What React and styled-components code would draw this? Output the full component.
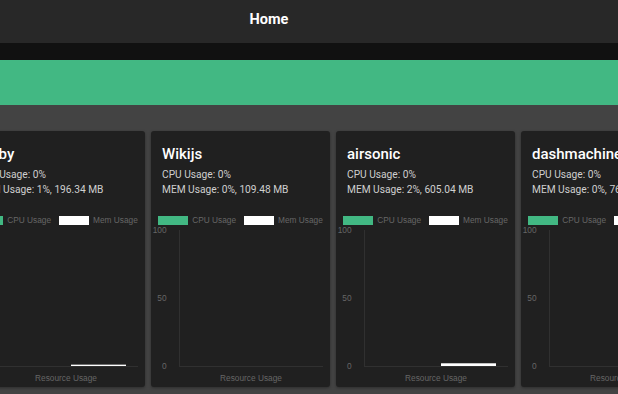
import React from 'react';
import styled, { createGlobalStyle } from 'styled-components';

const GlobalStyle = createGlobalStyle`
    html, body {
        margin: 0;
        padding: 0;
        background: #434343;
        overflow: hidden;
        font-family: Roboto, "Liberation Sans", sans-serif;
    }
`

const Page = styled.div`
    width: 618px;
    height: 394px;
    overflow: hidden;
    background: #434343;
`

const Header = styled.div`
    height: 43px;
    background: #282828;
    display: flex;
    align-items: center;
    justify-content: center;
    padding-right: 80px;
`

const HeaderTitle = styled.h1`
    margin: 0;
    color: #fff;
    font-size: 14.5px;
    font-weight: 700;
    padding-bottom: 4px;
`

const Strip = styled.div`
    height: 17px;
    background: #111111;
`

const Banner = styled.div`
    height: 45px;
    background: #42b883;
`

const CardRow = styled.div`
    display: flex;
    gap: 6px;
    margin-left: -34px;
    padding-top: 26px;
`

const Card = styled.div`
    flex: 0 0 179px;
    height: 256px;
    box-sizing: border-box;
    padding-top: 14px;
    background: #202020;
    border-radius: 3px;
    box-shadow: 0 1px 3px rgba(0, 0, 0, 0.35);
    display: flex;
    flex-direction: column;
    overflow: hidden;
`

const Title = styled.div`
    padding: 0 11px;
    color: #fff;
    font-size: 15px;
    font-weight: 500;
    line-height: 18px;
    white-space: nowrap;
`

const Stat = styled.div`
    padding: 0 11px;
    margin-top: ${p => p.first ? '4px' : '0'};
    color: #cfcfcf;
    font-size: 10.2px;
    line-height: 15px;
    white-space: nowrap;
`

const Legend = styled.div`
    display: flex;
    justify-content: center;
    align-items: center;
    gap: 8px;
    margin-top: 18px;
    height: 10px;
    font-family: "Liberation Sans", Arial, sans-serif;
    font-size: 8.3px;
    color: #666;
    white-space: nowrap;
`

const LegendItem = styled.div`
    display: flex;
    align-items: center;
    gap: 4px;
`

const Swatch = styled.span`
    display: block;
    width: 30px;
    height: 9px;
    background: ${p => p.color};
`

const Plot = styled.svg`
    display: block;
    flex: 0 0 auto;
    font-family: "Liberation Sans", Arial, sans-serif;
`

const TOP = 5;
const BOTTOM = 141;

const UsageChart = ({ cpu, mem }) => {
    const scale = BOTTOM - TOP;
    const cpuH = (cpu / 100) * scale;
    const memH = (mem / 100) * scale;
    return (
        <Plot width="179" height="162" viewBox="0 0 179 162">
            <g fill="#666" fontSize="8.3" textAnchor="end">
                <text x="15.5" y={TOP + 3}>100</text>
                <text x="15.5" y={(TOP + BOTTOM) / 2 + 3}>50</text>
                <text x="15.5" y={BOTTOM + 3}>0</text>
            </g>
            <line x1="28.5" y1={TOP} x2="28.5" y2={BOTTOM} stroke="#303030" strokeWidth="1" />
            <line x1="28" y1={BOTTOM + 0.5} x2="172" y2={BOTTOM + 0.5} stroke="#303030" strokeWidth="1" />
            {cpuH > 0 && <rect x="47" y={BOTTOM - cpuH} width="55" height={cpuH} fill="#42b883" />}
            {memH > 0 && <rect x="105" y={BOTTOM - memH} width="55" height={memH} fill="#fff" />}
            <text x="100" y="156" fill="#666" fontSize="8.3" textAnchor="middle">Resource Usage</text>
        </Plot>
    );
}

const containers = [
    { name: 'Emby', cpu: 0, mem: 1, memText: '196.34 MB' },
    { name: 'Wikijs', cpu: 0, mem: 0, memText: '109.48 MB' },
    { name: 'airsonic', cpu: 0, mem: 2, memText: '605.04 MB' },
    { name: 'dashmachine', cpu: 0, mem: 0, memText: '76.82 MB' },
];

const App = () => {
    return (<Page>
        <GlobalStyle />
        <Header>
            <HeaderTitle>Home</HeaderTitle>
        </Header>
        <Strip />
        <Banner />
        <CardRow>
            {containers.map(c => (
                <Card key={c.name}>
                    <Title>{c.name}</Title>
                    <Stat first>CPU Usage: {c.cpu}%</Stat>
                    <Stat>MEM Usage: {c.mem}%, {c.memText}</Stat>
                    <Legend>
                        <LegendItem><Swatch color="#42b883" />CPU Usage</LegendItem>
                        <LegendItem><Swatch color="#fff" />Mem Usage</LegendItem>
                    </Legend>
                    <UsageChart cpu={c.cpu} mem={c.mem} />
                </Card>
            ))}
        </CardRow>
    </Page>);
}

export default App;
